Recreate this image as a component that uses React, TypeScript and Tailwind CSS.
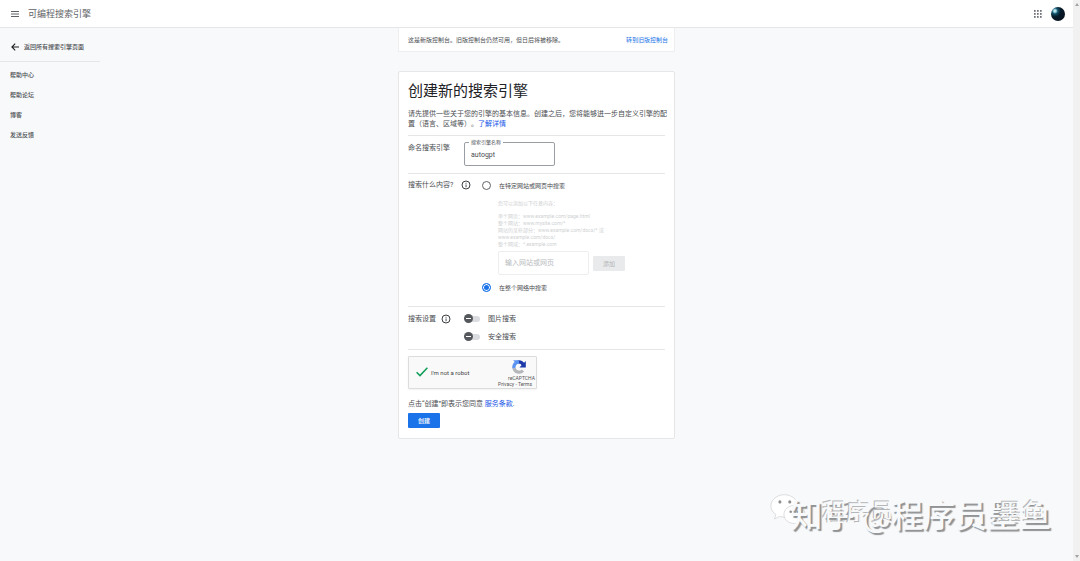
import React from 'react';

const sideLinks = ['帮助中心', '帮助论坛', '博客', '发送反馈'];

function InfoIcon() {
  return (
    <svg viewBox="0 0 24 24" className="size-[10px] shrink-0" aria-hidden="true">
      <circle cx="12" cy="12" r="9.6" fill="none" stroke="#3c4043" strokeWidth="2.4" />
      <path d="M11 10.500h2.200v7H11zM11 6.500h2.200v2.200H11z" fill="#3c4043" />
    </svg>
  );
}

function Toggle({ label }: { label: string }) {
  return (
    <label className="flex h-[18px] items-center">
      <span className="relative flex h-[10px] w-[16px] items-center">
        <input type="checkbox" role="switch" className="peer absolute inset-0 m-0 cursor-pointer opacity-0" />
        <span className="ml-[5px] h-[6px] flex-1 rounded-full bg-[#dadce0]" />
        <span className="absolute left-0 top-0 flex size-[9px] items-center justify-center rounded-full bg-[#54575b]">
          <span className="h-px w-[5px] bg-white" />
        </span>
      </span>
      <span className="ml-2 text-[7px]">{label}</span>
    </label>
  );
}

function Header() {
  return (
    <header className="flex h-7 items-center border-b border-[#e4e6e8] bg-white pl-[11px] pr-2">
      <button type="button" aria-label="菜单" className="flex size-2 items-center">
        <svg viewBox="0 0 8 8" className="size-2" stroke="#5f6368" strokeWidth="1">
          <path d="M0 1.500h8M0 4h8M0 6.500h8" />
        </svg>
      </button>
      <span className="ml-[9px] text-[9px] leading-3 text-[#5f6368]">可编程搜索引擎</span>
      <div className="ml-auto flex items-center gap-[9px]">
        <button type="button" aria-label="应用" className="size-2">
          <svg viewBox="0 0 8 8" className="size-2" fill="#5f6368">
            {[0, 3, 6].map((y) =>
              [0, 3, 6].map((x) => <rect key={`${x}-${y}`} x={x} y={y} width="1.700" height="1.700" rx="0.500" />),
            )}
          </svg>
        </button>
        <button type="button" aria-label="帐号" className="size-[14px]">
          <svg viewBox="0 0 14 14" className="size-[14px]">
            <defs>
              <radialGradient id="orb" cx="0.280" cy="0.280" r="0.750">
                <stop offset="0" stopColor="#eafcff" />
                <stop offset="0.140" stopColor="#8cc8d8" />
                <stop offset="0.280" stopColor="#12526b" />
                <stop offset="0.550" stopColor="#071b2b" />
                <stop offset="1" stopColor="#08131f" />
              </radialGradient>
            </defs>
            <circle cx="7" cy="7" r="7" fill="url(#orb)" />
          </svg>
        </button>
      </div>
    </header>
  );
}

function Sidebar() {
  return (
    <nav className="w-[100px] shrink-0 text-[6px] text-[#4a4d51]">
      <a href="#engines" className="flex h-[34px] items-center border-b border-[#e4e6e8] pl-[11px] pt-1 font-medium">
        <svg viewBox="0 0 8 8" className="size-2" fill="none" stroke="#202124" strokeWidth="1.100">
          <path d="M8 4H1M4.200 0.700L0.900 4l3.300 3.300" />
        </svg>
        <span className="ml-[5px]">返回所有搜索引擎页面</span>
      </a>
      <ul className="pt-[2px]">
        {sideLinks.map((text) => (
          <li key={text}>
            <a href="#help" className="flex h-5 items-center pl-[10px] font-medium">{text}</a>
          </li>
        ))}
      </ul>
    </nav>
  );
}

function Recaptcha() {
  return (
    <div className="flex h-[33px] w-[129px] items-center rounded-[1px] border border-[#dcdcdc] bg-[#f9f9f9] pl-[7px] pr-[1px] shadow-xs">
      <svg viewBox="0 0 12 10" className="mb-[2px] h-[10px] w-3" fill="none" stroke="#0f9d58" strokeWidth="1.500">
        <path d="M0.600 5.200l3.400 3.400L11.400 0.800" />
      </svg>
      <span className="ml-[3px] whitespace-nowrap text-[6px] text-[#444]">I'm not a robot</span>
      <div className="ml-auto flex flex-col items-end pt-px text-[5px] leading-[6px] text-[#555]">
        <svg viewBox="0 0 64 64" className="mb-px mr-[9px] size-[14px]" fill="none" strokeWidth="15">
          <path stroke="#b4b6b9" d="M9 37A24 24 0 0 0 50 48" />
          <path stroke="#5b93f0" d="M9 37A24 24 0 0 1 30 9" />
          <path stroke="#1c3aa9" d="M28 9A24 24 0 0 1 52 23" />
          <path fill="#1c3aa9" d="M63 5v29H34z" />
          <path fill="#5b93f0" d="M5 1h27v16H21z" />
        </svg>
        <span>reCAPTCHA</span>
        <span className="mr-[3px] whitespace-nowrap">Privacy - Terms</span>
      </div>
    </div>
  );
}

function Watermark() {
  return (
    <div className="pointer-events-none absolute bottom-[27px] right-[29px] whitespace-nowrap text-[#f8f9fa]" aria-hidden="true">
      <svg viewBox="0 0 40 36" className="absolute -left-[20px] -top-[6px] h-9 w-9" fill="#fff" stroke="#c9cbcd" strokeWidth="0.700">
        <path d="M16 1C8 1 1 6.500 1 13.500c0 4 2.200 7.300 5.500 9.600L5 28l5.600-2.900c1.800.5 3.500.8 5.400.8 8 0 15-5.400 15-12.400S24 1 16 1z" />
        <path d="M27 13c-6.500 0-11.500 4.500-11.500 10S20.500 33 27 33c1.500 0 3-.3 4.300-.7L36 34.500l-1.300-4C37.200 28.700 39 26 39 23c0-5.500-5.500-10-12-10z" />
        <g fill="#8b8d8f" stroke="none">
          <circle cx="11" cy="9" r="1.700" />
          <circle cx="22" cy="9" r="1.700" />
          <circle cx="23" cy="20" r="1.400" />
          <circle cx="31" cy="20" r="1.400" />
        </g>
      </svg>
      <span className="relative block text-[32px] font-medium leading-9 [text-shadow:2px_2px_1px_#8f9193]">知乎 @程序员墨鱼</span>
      <span className="absolute -top-[1px] left-8 flex w-[224px] justify-between text-[24px] leading-8 [text-shadow:-1px_-1px_0_#b4b6b8]">
        <span>程序员</span>
        <span>墨鱼</span>
      </span>
    </div>
  );
}

export default function App() {
  return (
    <div className="relative flex min-h-screen bg-[#f8f9fa] font-['Roboto','Noto_Sans_CJK_SC',sans-serif] text-[#4a4d51]">
      <div className="min-w-0 flex-1">
        <Header />
        <div className="flex">
          <Sidebar />
          <main className="flex-1">
            <div className="ml-[298px] w-[277px]">
              <div className="flex h-6 items-center justify-between border border-t-0 border-[#eceef0] bg-white pl-[9px] pr-[6px] text-[6px]">
                <span>这是新版控制台。旧版控制台仍然可用，但日后将被移除。</span>
                <a href="#old" className="text-[#1a73e8]">转到旧版控制台</a>
              </div>
              <form className="mt-[19px] rounded-[2px] border border-[#e4e6e8] bg-white px-[9px] pb-[10px] text-[7px]" onSubmit={(e) => e.preventDefault()}>
                <h1 className="pt-[9px] text-[15px] leading-5 text-[#202124]">创建新的搜索引擎</h1>
                <p className="-mr-1 mt-2 pb-[6px] leading-[10px] [text-spacing-trim:space-all]">
                  请先提供一些关于您的引擎的基本信息。创建之后，您将能够进一步自定义引擎的配置（语言、区域等）。
                  <a href="#more" className="text-[#1a57e8]">了解详情</a>
                </p>
                <div className="flex border-t border-[#e4e6e8] pb-[7px] pt-[6px]">
                  <label htmlFor="engine" className="w-[56px] pt-[1px] leading-[10px]">命名搜索引擎</label>
                  <fieldset className="-mt-[2px] h-[26px] w-[91px] rounded-[2px] border border-[#9a9ea3] pl-1">
                    <legend className="px-[2px] text-[5px] leading-[5px]">搜索引擎名称</legend>
                    <input id="engine" defaultValue="autogpt" className="block h-5 w-full pl-[2px] text-[7px] outline-none" />
                  </fieldset>
                </div>
                <div className="flex border-t border-[#e4e6e8] pb-[14px] pt-[6px]">
                  <div className="flex h-[10px] w-[74px] items-center gap-2 whitespace-nowrap">搜索什么内容? <InfoIcon /></div>
                  <div className="flex-1 text-[6px]">
                    <label className="flex h-[10px] items-center gap-2">
                      <input type="radio" name="scope" className="m-0 size-[9px] appearance-none rounded-full border border-[#5f6368]" />
                      在特定网站或网页中搜索
                    </label>
                    <div className="ml-[16px] pt-[10px] text-[5px] leading-[7px] text-[#cfd1d3]">
                      <p>您可以添加以下任意内容：</p>
                      <p className="mt-[6px]">单个网页：www.example.com/page.html</p>
                      <p>整个网站：www.mysite.com/*</p>
                      <p>网站的某些部分：www.example.com/docs/* 或</p>
                      <p>www.example.com/docs/</p>
                      <p>整个网域：*.example.com</p>
                      <div className="mt-[3px] flex items-center gap-1">
                        <input aria-label="输入网站或网页" placeholder="输入网站或网页" disabled className="h-6 w-[91px] rounded-[2px] border border-[#eceef0] px-[6px] text-[7px] placeholder:text-[#b8babd]" />
                        <button type="button" disabled className="h-[15px] w-8 rounded-[1px] bg-[#e8eaeb] text-[6px] text-[#b3b5b8]">添加</button>
                      </div>
                    </div>
                    <label className="mt-[7px] flex h-[10px] items-center gap-2">
                      <input type="radio" name="scope" defaultChecked className="m-0 size-[9px] appearance-none rounded-full border border-[#1a73e8] bg-[#1a73e8] shadow-[inset_0_0_0_1px_#fff]" />
                      在整个网络中搜索
                    </label>
                  </div>
                </div>
                <div className="flex border-t border-[#e4e6e8] pb-[3px] pt-[3px]">
                  <div className="flex h-[18px] w-[56px] items-center gap-[5px]">搜索设置 <InfoIcon /></div>
                  <div><Toggle label="图片搜索" /><Toggle label="安全搜索" /></div>
                </div>
                <div className="border-t border-[#e4e6e8] pt-[6px]"><Recaptcha /></div>
                <p className="mt-[10px] leading-[10px]">点击“创建”即表示您同意 <a href="#terms" className="text-[#1a57e8]">服务条款</a>.</p>
                <button type="submit" className="mt-1 block h-[15px] w-8 rounded-[1px] bg-[#1a73e8] text-[6px] font-medium text-white">创建</button>
              </form>
            </div>
          </main>
        </div>
      </div>
      <div className="flex w-[7px] flex-col items-center justify-between bg-[#f1f1f1] py-[3px]" aria-hidden="true">
        <svg viewBox="0 0 4 3" className="h-[3px] w-1" fill="#a3a3a3"><path d="M0 3l2-3 2 3z" /></svg>
        <svg viewBox="0 0 4 3" className="h-[3px] w-1" fill="#a3a3a3"><path d="M0 0l2 3 2-3z" /></svg>
      </div>
      <Watermark />
    </div>
  );
}
